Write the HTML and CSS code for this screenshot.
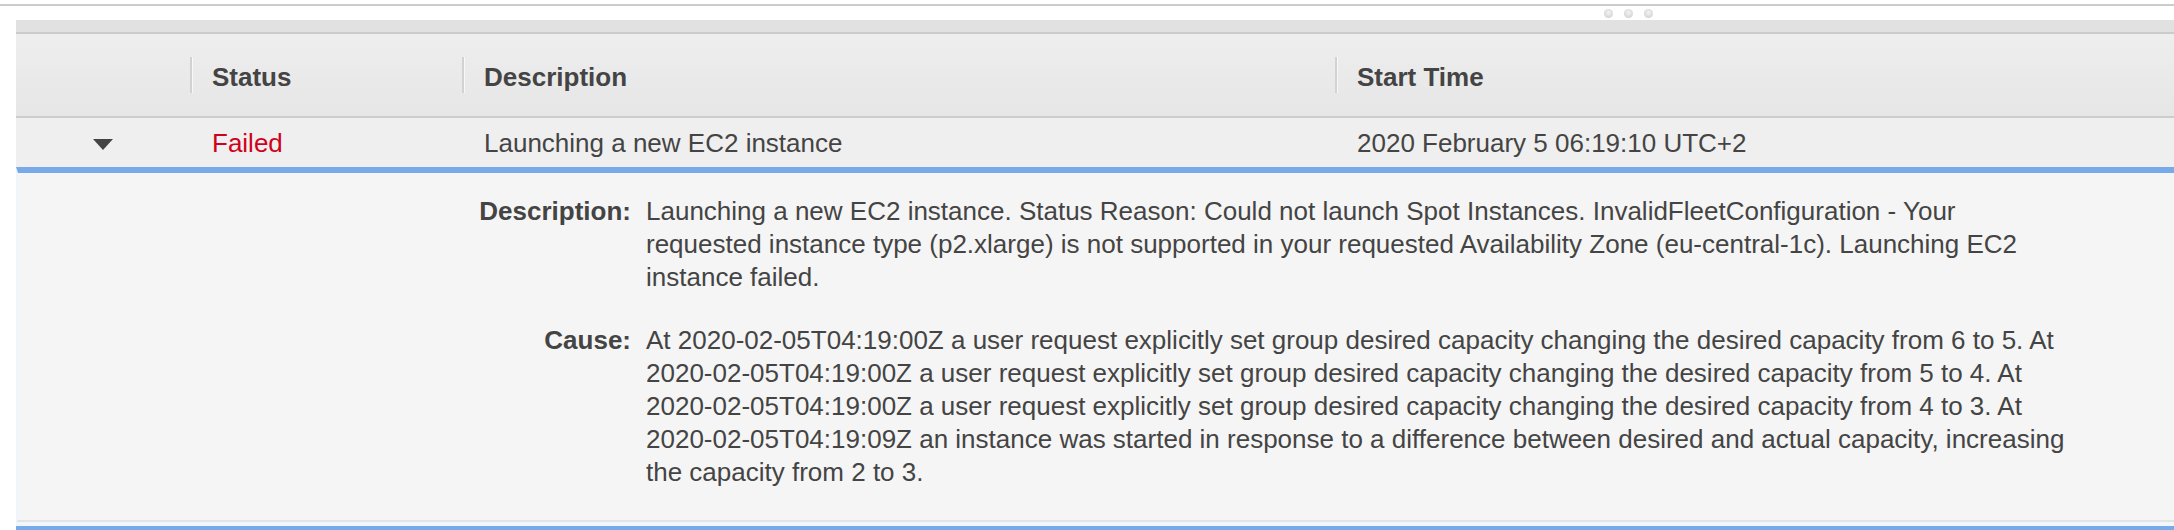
FILE: index.html
```html
<!DOCTYPE html>
<html>
<head>
<meta charset="utf-8">
<link rel="stylesheet" href="styles.css">
</head>
<body>
<div class="topline"></div>
<div class="handle">
  <span class="dot"></span><span class="dot"></span><span class="dot"></span>
</div>
<div class="table">
  <div class="band"></div>
  <div class="head">
    <div class="cell c1"></div>
    <div class="cell c2"><span class="sep"></span><span class="htext">Status</span></div>
    <div class="cell c3"><span class="sep"></span><span class="htext">Description</span></div>
    <div class="cell c4"><span class="sep"></span><span class="htext">Start Time</span></div>
  </div>
  <div class="row">
    <div class="cell c1"><span class="tri"></span></div>
    <div class="cell c2 pad"><span class="failed">Failed</span></div>
    <div class="cell c3 pad">Launching a new EC2 instance</div>
    <div class="cell c4 pad">2020 February 5 06:19:10 UTC+2</div>
  </div>
  <div class="detail">
    <div class="label">Description:</div>
    <div class="value">Launching a new EC2 instance. Status Reason: Could not launch Spot Instances. InvalidFleetConfiguration - Your requested instance type (p2.xlarge) is not supported in your requested Availability Zone (eu-central-1c). Launching EC2 instance failed.</div>
    <div class="label">Cause:</div>
    <div class="value">At 2020-02-05T04:19:00Z a user request explicitly set group desired capacity changing the desired capacity from 6 to 5. At 2020-02-05T04:19:00Z a user request explicitly set group desired capacity changing the desired capacity from 5 to 4. At 2020-02-05T04:19:00Z a user request explicitly set group desired capacity changing the desired capacity from 4 to 3. At 2020-02-05T04:19:09Z an instance was started in response to a difference between desired and actual capacity, increasing the capacity from 2 to 3.</div>
  </div>
  <div class="gap"></div>
  <div class="nextbar"></div>
</div>
</body>
</html>
```
FILE: styles.css
```css
html, body {
  margin: 0;
  padding: 0;
  background: #ffffff;
  font-family: "Liberation Sans", Arial, sans-serif;
  color: #444444;
  overflow: hidden;
}
.topline {
  margin-top: 4px;
  height: 2px;
  background: #cccccc;
}
.handle {
  height: 14px;
  display: flex;
  align-items: center;
  gap: 11px;
  padding-left: 1604px;
}
.dot {
  width: 9px;
  height: 9px;
  border-radius: 50%;
  background: radial-gradient(circle at 50% 40%, #f4f4f4 0%, #dcdcdc 55%, #c8c8c8 100%);
}
.table {
  margin-left: 16px;
}
.band {
  height: 12px;
  background: #e1e1e1;
  border-bottom: 2px solid #cbcbcb;
}
.head, .row {
  display: grid;
  grid-template-columns: 174px 272px 873px 1fr;
}
.head {
  height: 82px;
  background: linear-gradient(#eeeeee, #e6e6e6);
  border-bottom: 2px solid #cccccc;
  font-weight: bold;
  font-size: 26px;
  color: #444444;
}
.htext {
  padding-top: 4px;
}
.cell {
  display: flex;
  align-items: center;
}
.sep {
  width: 2px;
  height: 36px;
  background: #d2d2d2;
  border-right: 1px solid #f8f8f8;
  margin-right: 19px;
}
.row {
  height: 48px;
  background: #efefef;
  font-size: 26px;
  color: #444444;
  padding-top: 1px;
}
.pad {
  padding-left: 22px;
}
.c1 {
  justify-content: center;
}
.tri {
  width: 0;
  height: 0;
  border-left: 10px solid transparent;
  border-right: 10px solid transparent;
  border-top: 11px solid #444444;
  margin-top: 2px;
}
.failed {
  color: #d0021b;
}
.detail {
  border-top: 6px solid #78aaea;
  border-left: 2px solid #eef5fc;
  background: #f5f5f5;
  display: grid;
  grid-template-columns: 613px 1425px;
  column-gap: 15px;
  row-gap: 30px;
  padding: 22px 0 31px 0;
  font-size: 26px;
  line-height: 33px;
  border-bottom: 2px solid #e3e3e3;
}
.label {
  text-align: right;
  font-weight: bold;
}
.value {
  color: #444444;
}
.gap {
  height: 4px;
  background: #f1f7fd;
}
.nextbar {
  height: 6px;
  background: #78aaea;
}
```
